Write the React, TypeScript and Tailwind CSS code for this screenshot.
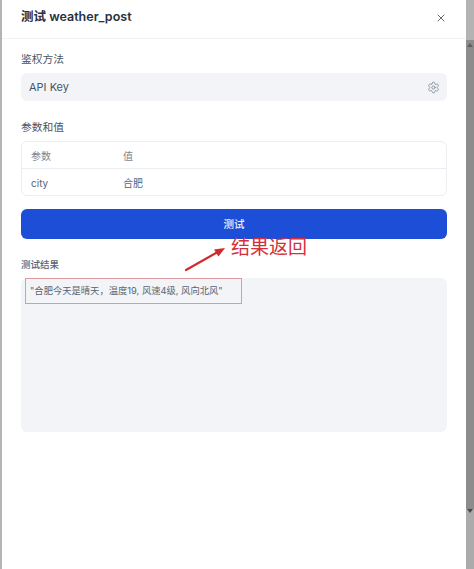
import React from "react";
import { X, Settings } from "lucide-react";

export default function App() {
  return (
    <div className="flex h-[569px] w-[474px] overflow-hidden bg-white font-['Inter','Noto_Sans_CJK_SC',sans-serif]">
      <div className="w-[2px] shrink-0 bg-[#b4b4b4]" />
      <div className="relative flex min-w-0 flex-1 flex-col">
        <header className="flex h-[39px] shrink-0 items-center justify-between border-b border-[#f1f2f4] pb-[3px] pl-[19px] pr-[19px]">
          <h1 className="text-[12.5px] font-semibold text-[#27303f]">测试 weather_post</h1>
          <X className="h-[12px] w-[12px] text-[#4b5563]" strokeWidth={1.75} />
        </header>
        <main className="flex flex-col px-[19px]">
          <div className="mt-[13px] text-[10.75px] leading-[16px] text-[#4b5563]">鉴权方法</div>
          <div className="mt-[5px] flex h-[28px] items-center justify-between rounded-[6px] bg-[#f2f4f7] pl-[8px] pr-[7px]">
            <span className="text-[11px] text-[#4b5563]">API Key</span>
            <Settings className="h-[13px] w-[13px] text-[#7a828e]" strokeWidth={1.5} />
          </div>
          <div className="mt-[19px] text-[10.75px] leading-[16px] text-[#4b5563]">参数和值</div>
          <div className="mt-[5px] overflow-hidden rounded-[6px] border border-[#eceef1] text-[10px] leading-[14px]">
            <div className="flex h-[27px] items-center border-b border-[#eceef1] pt-px text-[#7d8590]">
              <span className="w-[101px] pl-[9px]">参数</span>
              <span>值</span>
            </div>
            <div className="flex h-[26px] items-center pt-px text-[#5b6472]">
              <span className="w-[101px] pl-[9px]">city</span>
              <span>合肥</span>
            </div>
          </div>
          <button className="mt-[13px] flex h-[30px] items-center justify-center rounded-[6px] bg-[#1d4ed8] pt-px text-[10.5px] font-medium text-[#eef2ff]">
            测试
          </button>
          <div className="mt-[19px] text-[9.5px] font-medium leading-[14px] text-[#5b6472]">测试结果</div>
          <div className="mt-[6px] h-[154px] rounded-[6px] bg-[#f2f4f7] pl-[4px]">
            <div className="flex h-[26px] w-[217px] items-center border border-[#dd9a9e] pl-[4px] text-[9.3px] text-[#5b6472]">
              "合肥今天是晴天，温度19, 风速4级, 风向北风"
            </div>
          </div>
        </main>
        <span className="absolute left-[229px] top-[235px] text-[19px] leading-[26px] text-[#d5303a]">结果返回</span>
        <svg className="absolute left-[181px] top-[245px]" width="44" height="28" viewBox="0 0 44 28" fill="none">
          <path d="M3 25 L33 8" stroke="#cf2a2f" strokeWidth="2.2" strokeLinecap="round" />
          <path d="M42 3 L31 4.5 L35.5 11.5 Z" fill="#cf2a2f" />
        </svg>
      </div>
      <div className="relative flex w-[8px] shrink-0 flex-col bg-[#a9a9a9]">
        <div className="h-[40px] bg-[#b3b3b3]" />
        <div className="h-[469px] bg-[#8c8c8c]" />
        <div className="flex-1 bg-[#ababab]" />
        <svg className="absolute left-[1px] top-[43px]" width="6" height="4" viewBox="0 0 6 4">
          <path d="M3 0 L6 4 L0 4 Z" fill="#5f5f5f" />
        </svg>
        <svg className="absolute left-[1px] top-[509px]" width="6" height="4" viewBox="0 0 6 4">
          <path d="M0 0 L6 0 L3 4 Z" fill="#4a4a4a" />
        </svg>
      </div>
    </div>
  );
}
